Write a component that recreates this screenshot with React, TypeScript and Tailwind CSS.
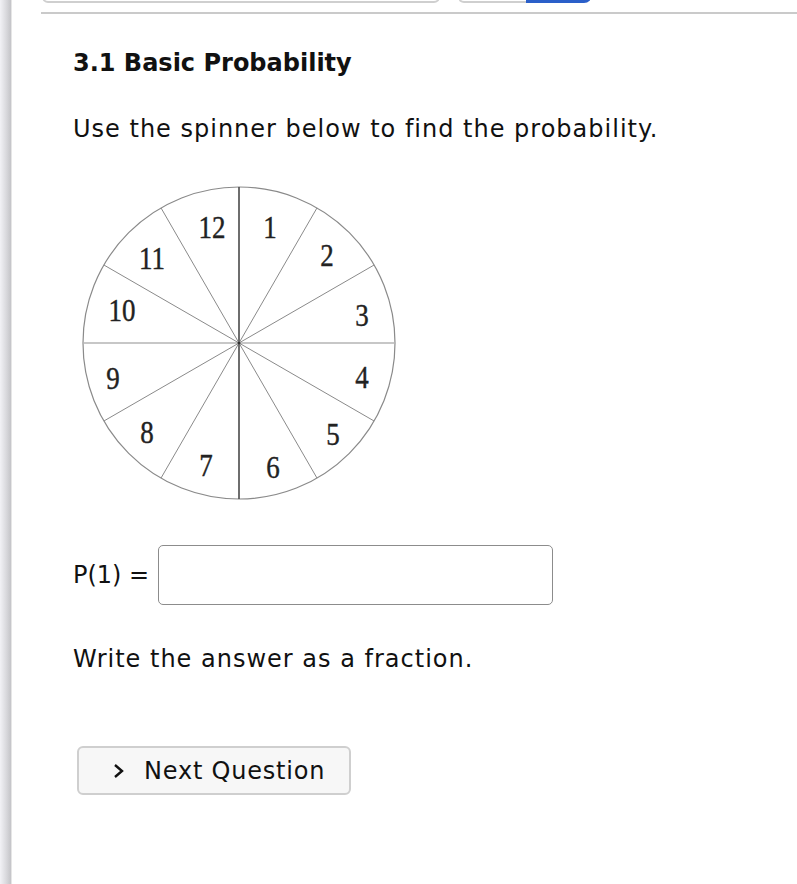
import React from "react";

const CX = 159;
const CY = 160;
const R = 156;

const labels: { t: string; x: number; y: number }[] = [
  { t: "12", x: 212, y: 227 },
  { t: "1", x: 270, y: 227 },
  { t: "2", x: 327, y: 255 },
  { t: "3", x: 362, y: 315 },
  { t: "4", x: 362, y: 377 },
  { t: "5", x: 333, y: 434 },
  { t: "6", x: 273, y: 467 },
  { t: "7", x: 206, y: 465 },
  { t: "8", x: 147, y: 432 },
  { t: "9", x: 113, y: 378 },
  { t: "10", x: 122, y: 310 },
  { t: "11", x: 152, y: 258 },
];

function Spinner() {
  const spokes = [];
  for (let k = 0; k < 6; k++) {
    const a = (k * 30 * Math.PI) / 180;
    const dx = Math.sin(a) * R;
    const dy = -Math.cos(a) * R;
    let stroke = "#8a8a8a";
    let w = 1;
    if (k === 0) {
      stroke = "#4a4a4a";
      w = 1.6;
    } else if (k === 3) {
      stroke = "#b4b4b4";
      w = 1.6;
    }
    spokes.push(
      <line
        key={k}
        x1={CX - dx}
        y1={CY - dy}
        x2={CX + dx}
        y2={CY + dy}
        stroke={stroke}
        strokeWidth={w}
      />
    );
  }
  return (
    <svg width="320" height="320" viewBox="0 0 320 320" className="block">
      <circle cx={CX} cy={CY} r={R} fill="white" stroke="#8a8a8a" strokeWidth="1.2" />
      {spokes}
      <circle cx={CX} cy={CY} r={1.5} fill="#333" />
      {labels.map((l) => (
        <text
          key={l.t}
          transform={`translate(${l.x - 80} ${l.y - 183}) scale(1 1.15)`}
          textAnchor="middle"
          dominantBaseline="central"
          fontFamily="'Liberation Serif', 'Times New Roman', serif"
          fontSize="27"
          fill="#222"
          stroke="#222"
          strokeWidth="0.35"
        >
          {l.t}
        </text>
      ))}
    </svg>
  );
}

export default function App() {
  return (
    <div className="relative w-[797px] h-[884px] overflow-hidden bg-white flex font-['DejaVu_Sans',sans-serif] [font-stretch:normal] [font-variant-ligatures:none]">
      <div className="w-[12px] h-full bg-gradient-to-r from-[#f2f2f6] via-[#dcdce0] to-[#c4c4c8] border-r border-[#e6e6e6] shrink-0" />
      <div className="flex-1 pl-[29px] flex flex-col">
        <div className="flex items-end h-[12px] overflow-hidden">
          <div className="w-[398px] h-[30px] ml-[1px] border-2 border-[#cfcfcf] rounded-[6px] mb-[9px] shrink-0" />
          <div className="w-[68px] h-[30px] ml-[18px] border-2 border-r-0 border-[#cfcfcf] rounded-l-[6px] mb-[9px] shrink-0" />
          <div className="w-[66px] h-[30px] bg-[#2a5fc9] rounded-r-[8px] mb-[9px] shrink-0" />
        </div>
        <div className="h-[2px] bg-[#cacaca] w-full" />
        <div className="pl-[32px] flex flex-col">
          <h1 className="mt-[33px] text-[24px] leading-[32px] font-bold text-[#111]">3.1 Basic Probability</h1>
          <p className="mt-[34px] text-[24px] leading-[32px] tracking-[1px] text-[#111]">Use the spinner below to find the probability.</p>
          <div className="mt-[38px] ml-[7px]">
            <Spinner />
          </div>
          <div className="mt-[42px] flex items-center">
            <span className="text-[24px] leading-[32px] text-[#111] w-[85px] shrink-0">P(1) =</span>
            <div className="w-[395px] h-[60px] border border-[#8c8c8c] rounded-[5px] bg-white" />
          </div>
          <p className="mt-[38px] text-[24px] leading-[32px] tracking-[1px] text-[#111]">Write the answer as a fraction.</p>
          <div className="mt-[71px] ml-[4px]">
            <button className="w-[274px] h-[49px] border-2 border-[#cfcfcf] rounded-[6px] bg-[#f7f7f7] flex items-center pl-[34px] text-[24px] tracking-[0.8px] text-[#111]">
              <svg width="12" height="18" viewBox="0 0 12 18" className="mr-[19px]">
                <path d="M2 3 L9 9 L2 15" fill="none" stroke="#111" strokeWidth="2.4" />
              </svg>
              <span>Next Question</span>
            </button>
          </div>
        </div>
      </div>
    </div>
  );
}
